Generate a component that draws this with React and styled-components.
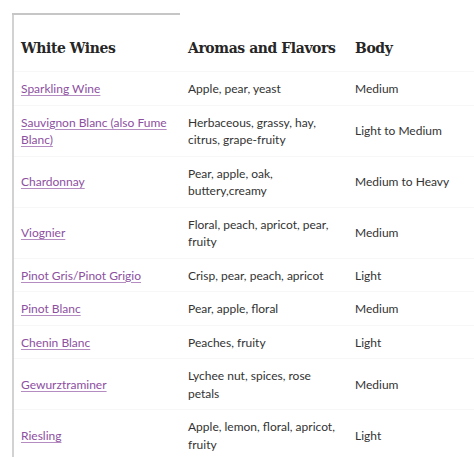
import styled, { createGlobalStyle } from "styled-components"

const GlobalStyle = createGlobalStyle`
    html, body {
        margin: 0;
        padding: 0;
        background: #ffffff;
    }
    body {
        font-family: Lato, "Liberation Sans", sans-serif;
        color: #333333;
    }
`

const Page = styled.div`
    padding: 13px 0 0 12px;
    height: 457px;
    box-sizing: border-box;
    overflow: hidden;
`

const TopRule = styled.div`
    width: 168px;
    height: 2px;
    background: #c6c6c6;
`

const Frame = styled.div`
    border-left: 2px solid #d2d2d2;
    padding-top: 9px;
    min-height: 480px;
`

const Table = styled.div`
    display: grid;
    grid-template-columns: 167px 167px 1fr;
`

const HeadCell = styled.div`
    font-family: "DejaVu Serif Condensed", "DejaVu Serif", "Liberation Serif", serif;
    font-stretch: condensed;
    font-weight: bold;
    font-size: 15.5px;
    letter-spacing: -0.4px;
    line-height: 24px;
    color: #262626;
    white-space: nowrap;
    padding: 12px 8px 12px 7px;
`

const Cell = styled.div`
    display: flex;
    align-items: center;
    font-size: 12px;
    line-height: 17.5px;
    padding: 8px 8px 8px 7px;
    border-top: 1px solid #f7f7f7;
    margin-top: -1px;
`

const WineLink = styled.a`
    color: #8d4f9f;
    text-decoration: underline;
    text-decoration-color: #b58cc2;
    text-underline-offset: 2px;
`

const wines = [
    ["Sparkling Wine", "Apple, pear, yeast", "Medium"],
    ["Sauvignon Blanc (also Fume Blanc)", "Herbaceous, grassy, hay, citrus, grape-fruity", "Light to Medium"],
    ["Chardonnay", "Pear, apple, oak, buttery,creamy", "Medium to Heavy"],
    ["Viognier", "Floral, peach, apricot, pear, fruity", "Medium"],
    ["Pinot Gris/Pinot Grigio", "Crisp, pear, peach, apricot", "Light"],
    ["Pinot Blanc", "Pear, apple, floral", "Medium"],
    ["Chenin Blanc", "Peaches, fruity", "Light"],
    ["Gewurztraminer", "Lychee nut, spices, rose petals", "Medium"],
    ["Riesling", "Apple, lemon, floral, apricot, fruity", "Light"],
]

function App () {
    return (
        <Page>
            <GlobalStyle />
            <TopRule />
            <Frame>
                <Table>
                    <HeadCell>White Wines</HeadCell>
                    <HeadCell>Aromas and Flavors</HeadCell>
                    <HeadCell>Body</HeadCell>
                    {wines.map(([name, aromas, body]) => (
                        <>
                            <Cell key={name + "-n"}><span><WineLink href="#">{name}</WineLink></span></Cell>
                            <Cell key={name + "-a"}>{aromas}</Cell>
                            <Cell key={name + "-b"}>{body}</Cell>
                        </>
                    ))}
                </Table>
            </Frame>
        </Page>
    )
}

export default App
